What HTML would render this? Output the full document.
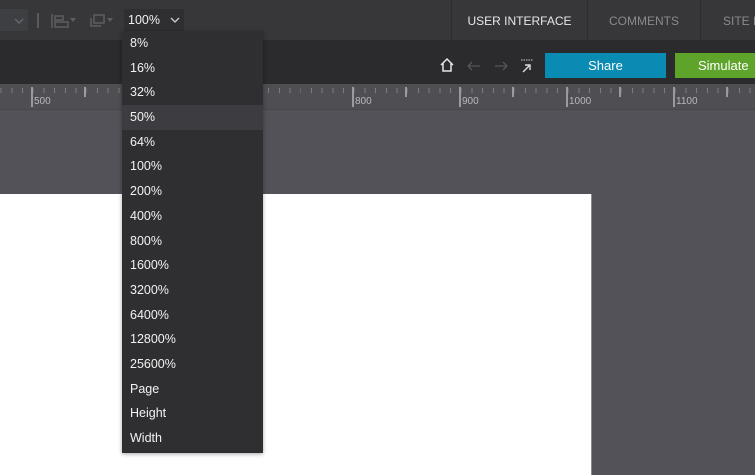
<!DOCTYPE html>
<html><head><meta charset="utf-8"><style>
*{margin:0;padding:0;box-sizing:border-box}
body{width:755px;height:475px;overflow:hidden;position:relative;background:#535258;font-family:"Liberation Sans",sans-serif}
.abs{position:absolute}
#top{left:0;top:0;width:755px;height:40px;background:#37373a}
#row2{left:0;top:40px;width:755px;height:44px;background:#2b2b2d}
#ruler{left:0;top:84px;width:755px;height:26px;background:#4e4e53;border-bottom:1px solid #47474c}
.tab{top:0;height:40px;border-left:1px solid #2c2c2e;color:#8a8a8e;font-size:12px;line-height:42px;text-align:center;white-space:nowrap;overflow:hidden}
.btn{top:53px;height:25px;color:#fff;font-size:13px;line-height:25px;text-align:center;white-space:nowrap}
.mj{top:3px;width:2px;height:20px;background:#9a9aa0}
.lb{top:12px;font-size:10px;color:#b8b8bc}
#dd{left:122px;top:31px;width:141px;height:422px;background:#2f2f32;box-shadow:0 1px 4px rgba(0,0,0,.35)}
#dd div{height:24.7px;line-height:24.7px;padding-left:8px;color:#f2f2f2;font-size:12.5px}
#dd .sel{background:#3d3d41}
</style></head><body>
<div id="top" class="abs"></div>
<div class="abs" style="left:0;top:9px;width:28px;height:22px;background:#3e3f42"></div>
<svg class="abs" style="left:14px;top:17px" width="10" height="8"><path d="M1 2l4 4 4-4" stroke="#6a6a6e" fill="none" stroke-width="1.3"/></svg>
<div class="abs" style="left:37px;top:13px;width:2px;height:15px;background:#5a5a5e"></div>
<svg class="abs" style="left:50px;top:12px" width="30" height="18"><g fill="none" stroke="#5e5e62" stroke-width="1.5"><path d="M2 2V16M5 4h8v4H5zM5 10h13v5H5z"/></g><path d="M20 6h6l-3 4z" fill="#5e5e62"/></svg>
<svg class="abs" style="left:88px;top:12px" width="30" height="18"><g fill="none" stroke="#5e5e62" stroke-width="1.5"><path d="M6 3h10v8H6zM3 6v8h10"/></g><path d="M19 6h6l-3 4z" fill="#5e5e62"/></svg>
<div class="abs" style="left:124px;top:9px;width:60px;height:22px;background:#2f2f32"></div>
<div class="abs" style="left:128px;top:13px;color:#f0f0f0;font-size:12.5px">100%</div>
<svg class="abs" style="left:170px;top:16px" width="10" height="8"><path d="M1 2l4 4 4-4" stroke="#d0d0d0" fill="none" stroke-width="1.3"/></svg>
<div class="tab abs" style="left:451px;width:136px;color:#e8e8ea">USER INTERFACE</div>
<div class="tab abs" style="left:587px;width:113px">COMMENTS</div>
<div class="tab abs" style="left:700px;width:55px;text-align:left;padding-left:22px">SITE MAP</div>
<div id="row2" class="abs"></div>
<svg class="abs" style="left:438px;top:56px" width="100" height="20">
<path d="M3 9l6-6 6 6M5 7v8h8V7" fill="none" stroke="#e6e6e6" stroke-width="1.5"/>
<path d="M30 10h12M30 10l4-4M30 10l4 4" fill="none" stroke="#55555a" stroke-width="1.3"/>
<path d="M57 10h12M69 10l-4-4M69 10l-4 4" fill="none" stroke="#55555a" stroke-width="1.3"/>
<path d="M83 4h12" stroke="#ccc" stroke-width="1" stroke-dasharray="1.5 1"/>
<path d="M85 16l7-7M87 9h5v5" fill="none" stroke="#ddd" stroke-width="1.4"/>
</svg>
<div class="btn abs" style="left:545px;width:121px;background:#0a8bb3">Share</div>
<div class="btn abs" style="left:675px;width:85px;background:#5ea42a;text-align:left;padding-left:23px">Simulate</div>
<div id="ruler" class="abs">
<div class="abs" style="left:0;top:4px;width:755px;height:5px;background:repeating-linear-gradient(90deg,transparent 0 0.7px,#7c7c82 0.7px 1.6px,transparent 1.6px 10.7px)"></div>
<div class="mj abs" style="left:31px"></div><div class="lb abs" style="left:34px">500</div>
<div class="mj abs" style="left:352px"></div><div class="lb abs" style="left:355px">800</div>
<div class="mj abs" style="left:459px"></div><div class="lb abs" style="left:462px">900</div>
<div class="mj abs" style="left:566px"></div><div class="lb abs" style="left:569px">1000</div>
<div class="mj abs" style="left:673px"></div><div class="lb abs" style="left:676px">1100</div>
<div class="abs" style="left:84px;top:3px;width:1.5px;height:10px;background:#9a9aa0"></div>
<div class="abs" style="left:405px;top:3px;width:1.5px;height:10px;background:#9a9aa0"></div>
<div class="abs" style="left:512px;top:3px;width:1.5px;height:10px;background:#9a9aa0"></div>
<div class="abs" style="left:619px;top:3px;width:1.5px;height:10px;background:#9a9aa0"></div>
<div class="abs" style="left:726px;top:3px;width:1.5px;height:10px;background:#9a9aa0"></div>
</div>
<div class="abs" style="left:0;top:194px;width:592px;height:281px;background:#fff;border-right:1px solid #8a8a8e"></div>
<div id="dd" class="abs">
<div>8%</div><div>16%</div><div>32%</div><div class="sel">50%</div><div>64%</div><div>100%</div><div>200%</div><div>400%</div><div>800%</div><div>1600%</div><div>3200%</div><div>6400%</div><div>12800%</div><div>25600%</div><div>Page</div><div>Height</div><div>Width</div>
</div>
</body></html>
